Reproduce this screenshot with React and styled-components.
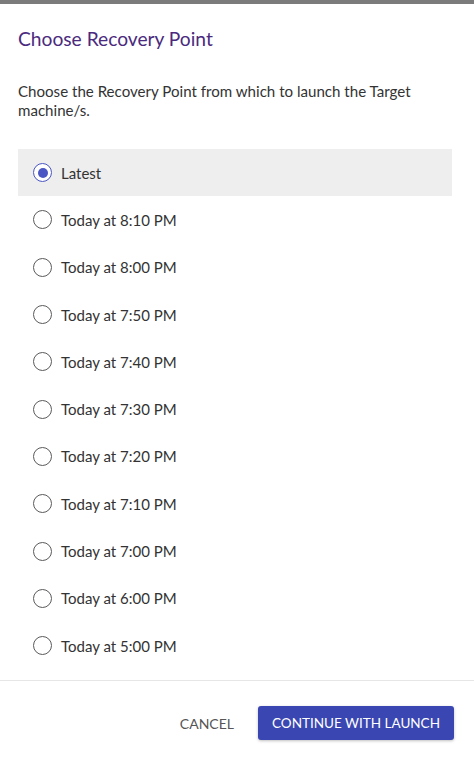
import React, { useState } from 'react';
import styled, { createGlobalStyle } from 'styled-components';

const GlobalStyle = createGlobalStyle`
body {
    margin: 0;
    background: #fff;
    font-family: Lato, 'Open Sans', sans-serif;
}
`

const Page = styled.div`
width: 474px;
height: 760px;
background: #fff;
border-top: 4px solid #7b7b7b;
box-sizing: border-box;
display: flex;
flex-direction: column;
`

const Body = styled.div`
padding: 23px 22px 0 18px;
`

const Title = styled.h2`
margin: 0;
font-size: 19.2px;
line-height: 24px;
font-weight: 400;
color: #4a2a7e;
`

const Description = styled.p`
margin: 31px 0 0;
font-size: 15.1px;
line-height: 19px;
color: #333;
`

const List = styled.div`
margin-top: 29px;
display: flex;
flex-direction: column;
`

const Row = styled.label`
height: 47.3px;
display: flex;
align-items: center;
gap: 9px;
padding-left: 15px;
background: ${props => props.selected ? '#eeeeee' : 'transparent'};
cursor: pointer;
font-size: 15px;
color: #333;
`

const Radio = styled.span`
width: 19px;
height: 19px;
box-sizing: border-box;
border-radius: 50%;
border: 1.5px solid ${props => props.checked ? '#4a56c4' : '#5a5a5a'};
display: flex;
align-items: center;
justify-content: center;
background: #fff;

&::after {
    content: '';
    width: 10px;
    height: 10px;
    border-radius: 50%;
    background: #4a56c4;
    display: ${props => props.checked ? 'block' : 'none'};
}
`

const Footer = styled.div`
margin-top: 11px;
border-top: 1px solid #e6e6e6;
padding: 25px 20px 0;
display: flex;
justify-content: flex-end;
align-items: center;
gap: 24px;
`

const CancelButton = styled.button`
border: none;
background: transparent;
font-family: inherit;
font-size: 14px;
color: #555;
padding: 0;
`

const LaunchButton = styled.button`
border: none;
border-radius: 3px;
background: #3a47b2;
color: #fff;
font-family: inherit;
font-size: 13.5px;
width: 196px;
height: 34px;
box-shadow: 0 1px 3px rgba(0,0,0,0.25);
`

const points = [
    'Latest',
    'Today at 8:10 PM',
    'Today at 8:00 PM',
    'Today at 7:50 PM',
    'Today at 7:40 PM',
    'Today at 7:30 PM',
    'Today at 7:20 PM',
    'Today at 7:10 PM',
    'Today at 7:00 PM',
    'Today at 6:00 PM',
    'Today at 5:00 PM',
]

const App = () => {
    const [selected, setSelected] = useState(0);
    return (
        <>
            <GlobalStyle/>
            <Page>
                <Body>
                    <Title>Choose Recovery Point</Title>
                    <Description>Choose the Recovery Point from which to launch the Target machine/s.</Description>
                    <List>
                        {points.map((p, i) => (
                            <Row key={p} selected={i === selected} onClick={() => setSelected(i)}>
                                <Radio checked={i === selected}/>
                                {p}
                            </Row>
                        ))}
                    </List>
                </Body>
                <Footer>
                    <CancelButton>CANCEL</CancelButton>
                    <LaunchButton>CONTINUE WITH LAUNCH</LaunchButton>
                </Footer>
            </Page>
        </>
    )
}

export default App
